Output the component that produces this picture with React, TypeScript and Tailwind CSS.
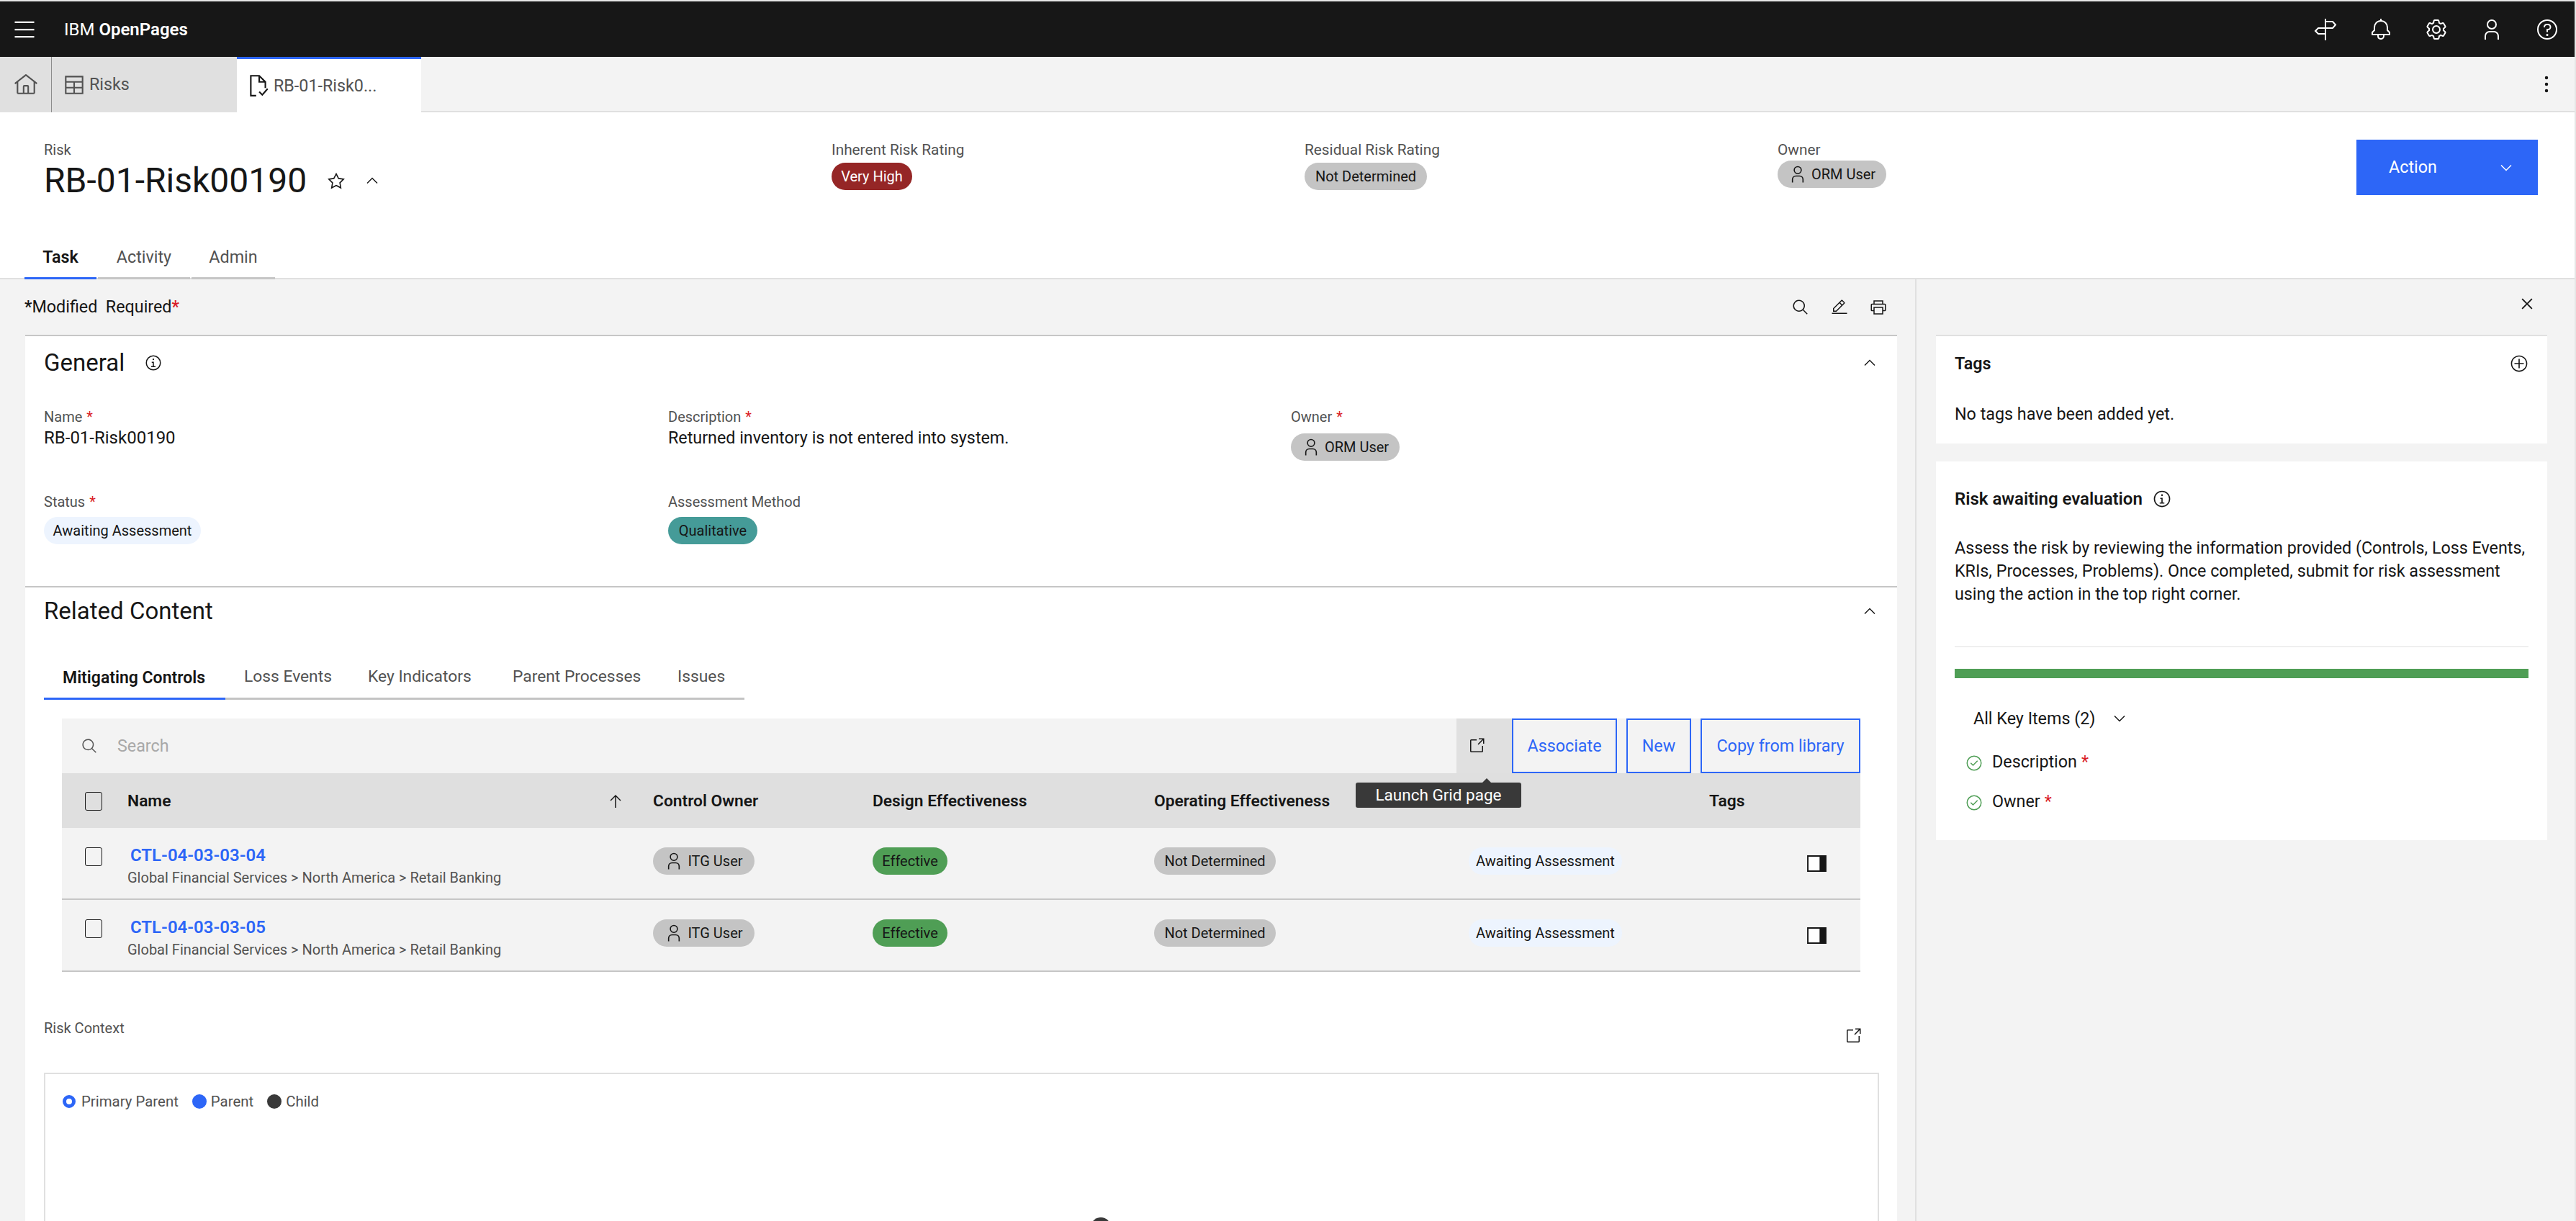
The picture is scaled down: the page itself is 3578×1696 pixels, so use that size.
import type { ReactNode } from "react";

type IconProps = { className?: string };

const Carbon = ({ className, children }: IconProps & { children: ReactNode }) => (
  <svg viewBox="0 0 32 32" fill="currentColor" className={className}>
    {children}
  </svg>
);

const Menu = (p: IconProps) => (
  <Carbon {...p}>
    <path d="M4 6H28V8H4zM4 15H28V17H4zM4 24H28V26H4z" />
  </Carbon>
);
const Signpost = (p: IconProps) => (
  <svg viewBox="0 0 32 32" fill="none" stroke="currentColor" strokeWidth="2" className={p.className}>
    <path d="M16 1V31M16 5H26L30 9.5L26 14H16M16 14H6L2 18L6 22H16" />
  </svg>
);
const Bell = (p: IconProps) => (
  <Carbon {...p}>
    <path d="M28.7071,19.293,26,16.5859V13a10.0136,10.0136,0,0,0-9-9.9492V1H15V3.0508A10.0136,10.0136,0,0,0,6,13v3.5859L3.2929,19.293A1,1,0,0,0,3,20v3a1,1,0,0,0,1,1h7v.7768A5.152,5.152,0,0,0,15.5,29.9746,5.0057,5.0057,0,0,0,21,25V24h7a1,1,0,0,0,1-1V20A1,1,0,0,0,28.7071,19.293ZM19,25a3,3,0,0,1-6,0V24h6Zm8-3H5V20.4141L7.707,17.707A1,1,0,0,0,8,17V13a8,8,0,0,1,16,0v4a1,1,0,0,0,.293.707L27,20.4141Z" />
  </Carbon>
);
const Gear = (p: IconProps) => (
  <Carbon {...p}>
    <path d="M27,16.76c0-.25,0-.5,0-.76s0-.51,0-.77l1.92-1.68A2,2,0,0,0,29.3,11L26.94,7a2,2,0,0,0-1.73-1,2,2,0,0,0-.64.1l-2.43.82a11.35,11.35,0,0,0-1.31-.75l-.51-2.52a2,2,0,0,0-2-1.61H13.64a2,2,0,0,0-2,1.61l-.51,2.52a11.48,11.48,0,0,0-1.32.75L7.43,6.06A2,2,0,0,0,6.79,6,2,2,0,0,0,5.06,7L2.7,11a2,2,0,0,0,.41,2.51L5,15.24c0,.25,0,.5,0,.76s0,.51,0,.77L3.11,18.45A2,2,0,0,0,2.7,21L5.06,25a2,2,0,0,0,1.73,1,2,2,0,0,0,.64-.1l2.43-.82a11.35,11.35,0,0,0,1.31.75l.51,2.52a2,2,0,0,0,2,1.61h4.72a2,2,0,0,0,2-1.61l.51-2.52a11.48,11.48,0,0,0,1.32-.75l2.42.82a2,2,0,0,0,.64.1,2,2,0,0,0,1.73-1L29.3,21a2,2,0,0,0-.41-2.51ZM25.21,24l-3.43-1.16a8.86,8.86,0,0,1-2.71,1.57L18.36,28H13.64l-.71-3.55a9.36,9.36,0,0,1-2.7-1.57L6.79,24,4.43,20l2.72-2.4a8.9,8.9,0,0,1,0-3.13L4.43,12,6.79,8l3.43,1.16a8.86,8.86,0,0,1,2.71-1.57L13.64,4h4.72l.71,3.55a9.36,9.36,0,0,1,2.7,1.57L25.21,8,27.57,12l-2.72,2.4a8.9,8.9,0,0,1,0,3.13L27.57,20Z" />
    <path d="M16,22a6,6,0,1,1,6-6A5.94,5.94,0,0,1,16,22Zm0-10a3.91,3.91,0,0,0-4,4,3.91,3.91,0,0,0,4,4,3.91,3.91,0,0,0,4-4A3.91,3.91,0,0,0,16,12Z" />
  </Carbon>
);
const UserIcon = (p: IconProps) => (
  <Carbon {...p}>
    <path d="M16,4a5,5,0,1,1-5,5,5,5,0,0,1,5-5m0-2a7,7,0,1,0,7,7A7,7,0,0,0,16,2Z" />
    <path d="M26,30H24V25a5,5,0,0,0-5-5H13a5,5,0,0,0-5,5v5H6V25a7,7,0,0,1,7-7h6a7,7,0,0,1,7,7Z" />
  </Carbon>
);
const Help = (p: IconProps) => (
  <Carbon {...p}>
    <path d="M16,2A14,14,0,1,0,30,16,14,14,0,0,0,16,2Zm0,26A12,12,0,1,1,28,16,12,12,0,0,1,16,28Z" />
    <circle cx="16" cy="23.5" r="1.5" />
    <path d="M17,8H15.5A4.49,4.49,0,0,0,11,12.5V13h2v-.5A2.5,2.5,0,0,1,15.5,10H17a2.5,2.5,0,0,1,0,5H15v4.5h2V17a4.5,4.5,0,0,0,0-9Z" />
  </Carbon>
);
const Home = (p: IconProps) => (
  <Carbon {...p}>
    <path d="M16.6123,2.2138a1.01,1.01,0,0,0-1.2427,0L1,13.4194l1.2427,1.5717L4,13.6209V26a2.0041,2.0041,0,0,0,2,2H26a2.0037,2.0037,0,0,0,2-2V13.63L29.7573,15,31,13.4282ZM18,26H14V18h4Zm2,0V18a2.0023,2.0023,0,0,0-2-2H14a2.002,2.002,0,0,0-2,2v8H6V12.0615l10-7.79,10,7.8005V26Z" />
  </Carbon>
);
const TableIcon = (p: IconProps) => (
  <svg viewBox="0 0 32 32" fill="none" stroke="currentColor" strokeWidth="2" className={p.className}>
    <path d="M5 5H27V27H5ZM5 12H27M5 19.5H27M16 12V27" />
  </svg>
);
const DocCheck = (p: IconProps) => (
  <svg viewBox="0 0 32 32" fill="none" stroke="currentColor" strokeWidth="2" className={p.className}>
    <path d="M13 29H6V3H17L25 11V19M17 3V11H25M17 24L21 28L28 20" />
  </svg>
);
const Star = (p: IconProps) => (
  <Carbon {...p}>
    <path d="M16,6.52l2.76,5.58.46,1,1,.15,6.16.89L22,18.44l-.75.73.18,1,1.05,6.13-5.51-2.89L16,23l-.93.49L9.56,26.34l1-6.13.18-1L10,18.44,5.58,14.09l6.16-.89,1-.15.46-1L16,6.52M16,2l-4.55,9.22L1.28,12.69l7.36,7.18L6.9,30,16,25.22,25.1,30,23.36,19.87l7.36-7.17L20.55,11.22Z" />
  </Carbon>
);
const ChevronUp = (p: IconProps) => (
  <Carbon {...p}>
    <path d="M16 10 26 20 24.6 21.4 16 12.8 7.4 21.4 6 20z" />
  </Carbon>
);
const ChevronDown = (p: IconProps) => (
  <Carbon {...p}>
    <path d="M16 22 6 12 7.4 10.6 16 19.2 24.6 10.6 26 12z" />
  </Carbon>
);
const Close = (p: IconProps) => (
  <Carbon {...p}>
    <path d="M24 9.4 22.6 8 16 14.6 9.4 8 8 9.4 14.6 16 8 22.6 9.4 24 16 17.4 22.6 24 24 22.6 17.4 16z" />
  </Carbon>
);
const Search = (p: IconProps) => (
  <Carbon {...p}>
    <path d="M29,27.5859l-7.5521-7.5521a11.0177,11.0177,0,1,0-1.4141,1.4141L27.5859,29ZM4,13a9,9,0,1,1,9,9A9.01,9.01,0,0,1,4,13Z" />
  </Carbon>
);
const Edit = (p: IconProps) => (
  <Carbon {...p}>
    <path d="M2 26H30V28H2zM25.4 9c.8-.8.8-2 0-2.8l-3.6-3.6c-.8-.8-2-.8-2.8 0l-15 15V24h6.4L25.4 9zM20.4 4L24 7.6l-3 3L17.4 7 20.4 4zM6 22v-3.6l10-10 3.6 3.6-10 10H6z" />
  </Carbon>
);
const Printer = (p: IconProps) => (
  <Carbon {...p}>
    <path d="M28,9H25V3H7V9H4a2,2,0,0,0-2,2V21a2,2,0,0,0,2,2H7v6H25V23h3a2,2,0,0,0,2-2V11A2,2,0,0,0,28,9ZM9,5H23V9H9ZM23,27H9V17H23Zm5-6H25V15H7v6H4V11H28Z" />
  </Carbon>
);
const Info = (p: IconProps) => (
  <Carbon {...p}>
    <polygon points="17 22 17 14 13 14 13 16 15 16 15 22 12 22 12 24 20 24 20 22 17 22" />
    <path d="M16,8a1.5,1.5,0,1,0,1.5,1.5A1.5,1.5,0,0,0,16,8Z" />
    <path d="M16,30A14,14,0,1,1,30,16,14,14,0,0,1,16,30ZM16,4A12,12,0,1,0,28,16,12,12,0,0,0,16,4Z" />
  </Carbon>
);
const CheckCircle = (p: IconProps) => (
  <Carbon {...p}>
    <path d="M14 21.414 9 16.413 10.413 15 14 18.586 21.585 11 23 12.415 14 21.414z" />
    <path d="M16,2A14,14,0,1,0,30,16,14,14,0,0,0,16,2Zm0,26A12,12,0,1,1,28,16,12,12,0,0,1,16,28Z" />
  </Carbon>
);
const AddCircle = (p: IconProps) => (
  <Carbon {...p}>
    <path d="M16,4c6.6,0,12,5.4,12,12s-5.4,12-12,12S4,22.6,4,16S9.4,4,16,4 M16,2C8.3,2,2,8.3,2,16s6.3,14,14,14s14-6.3,14-14S23.7,2,16,2z" />
    <polygon points="24 15 17 15 17 8 15 8 15 15 8 15 8 17 15 17 15 24 17 24 17 17 24 17" />
  </Carbon>
);
const ArrowUp = (p: IconProps) => (
  <Carbon {...p}>
    <path d="M16 4 6 14 7.41 15.41 15 7.83 15 28 17 28 17 7.83 24.59 15.41 26 14 16 4z" />
  </Carbon>
);
const Launch = (p: IconProps) => (
  <Carbon {...p}>
    <path d="M26,28H6a2.0027,2.0027,0,0,1-2-2V6A2.0027,2.0027,0,0,1,6,4H16V6H6V26H26V16h2V26A2.0027,2.0027,0,0,1,26,28Z" />
    <polygon points="20 2 20 4 26.586 4 18 12.586 19.414 14 28 5.414 28 12 30 12 30 2 20 2" />
  </Carbon>
);
const SidePanel = (p: IconProps) => (
  <svg viewBox="0 0 28 24" className={p.className}>
    <path d="M1 1H27V23H1Z" fill="#ffffff" stroke="currentColor" strokeWidth="2" />
    <path d="M18 1H27V23H18Z" fill="currentColor" />
  </svg>
);
const Dots = (p: IconProps) => (
  <Carbon {...p}>
    <circle cx="16" cy="8" r="2" />
    <circle cx="16" cy="16" r="2" />
    <circle cx="16" cy="24" r="2" />
  </Carbon>
);

const Req = () => <span className="text-[#da1e28] ml-[6px]">*</span>;

const Pill = ({ className, children }: { className: string; children: ReactNode }) => (
  <span className={`inline-flex items-center justify-center h-[38px] rounded-[19px] text-[20px] whitespace-nowrap ${className}`}>
    {children}
  </span>
);

const UserPill = ({ name, className }: { name: string; className: string }) => (
  <Pill className={`bg-[#c4c4c4] text-[#161616] ${className}`}>
    <UserIcon className="w-[26px] h-[26px] mr-[6px]" />
    {name}
  </Pill>
);

const controls = [
  { id: "CTL-04-03-03-04", path: "Global Financial Services > North America > Retail Banking" },
  { id: "CTL-04-03-03-05", path: "Global Financial Services > North America > Retail Banking" },
];

const relatedTabs = [
  { label: "Loss Events", width: "w-[172px]" },
  { label: "Key Indicators", width: "w-[201px]" },
  { label: "Parent Processes", width: "w-[229px]" },
  { label: "Issues", width: "w-[119px]" },
];

const tableCols = "grid grid-cols-[91px_730px_305px_391px_437px_334px_136px_1fr]";

export default function App() {
  return (
    <div className="w-[3578px] h-[1696px] overflow-hidden bg-[#e6e6e6] pt-[2px] pr-[2px] font-['Roboto',sans-serif] text-[23.3px] text-[#161616]">
      <header className="h-[77px] bg-[#171717] text-white flex items-center">
        <Menu className="w-[36px] h-[36px] ml-[16px]" />
        <div className="ml-[37px] text-[24px]">
          IBM <span className="font-semibold">OpenPages</span>
        </div>
        <div className="ml-auto flex items-center gap-[45px] mr-[22px]">
          <Signpost className="w-[32px] h-[32px]" />
          <Bell className="w-[32px] h-[32px]" />
          <Gear className="w-[32px] h-[32px]" />
          <UserIcon className="w-[32px] h-[32px]" />
          <Help className="w-[32px] h-[32px]" />
        </div>
      </header>

      <nav className="h-[77px] bg-[#f3f3f3] border-b-2 border-[#e0e0e0] flex text-[#525252]">
        <div className="w-[72px] h-[77px] bg-[#e0e0e0] border-r border-[#8d8d8d] flex items-center justify-center">
          <Home className="w-[34px] h-[34px]" />
        </div>
        <div className="w-[257px] h-[77px] bg-[#e0e0e0] flex items-center pl-[14px] gap-[4px]">
          <TableIcon className="w-[34px] h-[34px]" />
          Risks
        </div>
        <div className="w-[256px] h-[77px] bg-white border-t-[3px] border-[#2d66f7] flex items-center pl-[13px] gap-[4px]">
          <DocCheck className="w-[34px] h-[34px] text-[#161616]" />
          RB-01-Risk0...
        </div>
        <div className="ml-auto mr-[21px] flex items-center">
          <Dots className="w-[36px] h-[36px] text-[#161616]" />
        </div>
      </nav>

      <section className="h-[232px] bg-white flex flex-col justify-between">
        <div className="flex pt-[38px] pl-[61px] pr-[51px]">
          <div className="w-[1094px]">
            <div className="text-[20px] leading-[28px] text-[#525252]">Risk</div>
            <div className="flex items-center h-[56px] mt-[1px]">
              <span className="text-[48px]">RB-01-Risk00190</span>
              <Star className="w-[26px] h-[26px] ml-[28px]" />
              <ChevronUp className="w-[24px] h-[24px] ml-[25px]" />
            </div>
          </div>
          <div className="w-[657px]">
            <div className="text-[20.8px] leading-[28px] text-[#525252]">Inherent Risk Rating</div>
            <Pill className="mt-[4px] w-[112px] bg-[#952626] text-white">Very High</Pill>
          </div>
          <div className="w-[657px]">
            <div className="text-[20.8px] leading-[28px] text-[#525252]">Residual Risk Rating</div>
            <Pill className="mt-[4px] w-[170px] bg-[#c4c4c4]">Not Determined</Pill>
          </div>
          <div className="w-[804px]">
            <div className="text-[20.8px] leading-[28px] text-[#525252]">Owner</div>
            <UserPill name="ORM User" className="mt-[1px] w-[151px]" />
          </div>
          <button className="w-[252px] h-[77px] bg-[#2d66f7] text-white text-left pl-[45px] flex items-center">
            Action
            <ChevronDown className="w-[24px] h-[24px] ml-[84px]" />
          </button>
        </div>
        <div className="border-b-2 border-[#e0e0e0] pl-[34px] flex gap-[2px] h-[58px]">
          <div className="w-[100px] h-[58px] border-b-[3px] border-[#2d66f7] flex items-center justify-center font-semibold">Task</div>
          <div className="w-[128px] h-[58px] border-b-[3px] border-[#c6c6c6] flex items-center justify-center text-[#525252]">Activity</div>
          <div className="w-[116px] h-[58px] border-b-[3px] border-[#c6c6c6] flex items-center justify-center text-[#525252]">Admin</div>
        </div>
      </section>

      <div className="flex h-[1308px] bg-[#f3f3f3]">
        <main className="w-[2662px] border-r-2 border-[#e0e0e0] pl-[35px] pr-[25px] shrink-0">
          <div className="h-[77px] flex items-center">
            <div className="-ml-[1px] text-[#161616]">
              <span className="font-semibold">*</span>Modified&nbsp; Required<span className="text-[#da1e28] font-semibold">*</span>
            </div>
            <div className="ml-auto flex items-center gap-[30px] mr-[14px]">
              <Search className="w-[24px] h-[24px]" />
              <Edit className="w-[24px] h-[24px]" />
              <Printer className="w-[24px] h-[24px]" />
            </div>
          </div>

          <section className="h-[351px] bg-white border-t-2 border-b-2 border-[#c6c6c6] pl-[26px] pr-[26px]">
            <div className="h-[73px] flex items-center">
              <span className="text-[33px]">General</span>
              <Info className="w-[24px] h-[24px] ml-[28px]" />
              <ChevronUp className="w-[24px] h-[24px] ml-auto" />
            </div>
            <div className="grid grid-cols-[867px_865px_1fr] grid-rows-[118px_auto] mt-[25px]">
              <div>
                <div className="text-[20px] leading-[28px] text-[#525252]">Name<Req /></div>
                <div className="text-[24px] leading-[28px] mt-[1px]">RB-01-Risk00190</div>
              </div>
              <div>
                <div className="text-[20px] leading-[28px] text-[#525252]">Description<Req /></div>
                <div className="leading-[28px] mt-[1px]">Returned inventory is not entered into system.</div>
              </div>
              <div>
                <div className="text-[20px] leading-[28px] text-[#525252]">Owner<Req /></div>
                <UserPill name="ORM User" className="mt-[9px] w-[151px]" />
              </div>
              <div>
                <div className="text-[20px] leading-[28px] text-[#525252]">Status<Req /></div>
                <Pill className="mt-[7px] w-[218px] bg-[#edf4fe]">Awaiting Assessment</Pill>
              </div>
              <div>
                <div className="text-[20px] leading-[28px] text-[#525252]">Assessment Method</div>
                <Pill className="mt-[7px] w-[124px] bg-[#459b98]">Qualitative</Pill>
              </div>
            </div>
          </section>

          <section className="h-[900px] bg-white pt-0 pl-[26px] pr-[25px]">
            <div className="h-[66px] flex items-center">
              <span className="text-[33px]">Related Content</span>
              <ChevronUp className="w-[24px] h-[24px] ml-auto mr-[1px]" />
            </div>

            <div className="mt-[33px] w-[973px] h-[57px] flex border-b-[3px] border-[#c4c4c4] text-[#525252] text-[22.8px]">
              <div className="w-[252px] h-[57px] border-b-[3px] border-[#2d66f7] pl-[26px] pt-[1px] flex items-center font-semibold text-[23px] text-[#161616]">
                Mitigating Controls
              </div>
              {relatedTabs.map((t) => (
                <div key={t.label} className={`${t.width} pl-[26px] pb-[4px] flex items-center whitespace-nowrap`}>
                  {t.label}
                </div>
              ))}
            </div>

            <div className="mt-[26px] ml-[25px] w-[2498px] relative">
              <div className="h-[76px] flex bg-[#f3f3f3]">
                <div className="flex-1 flex items-center pl-[27px] gap-[27px] text-[#a8a8a8]">
                  <Search className="w-[23px] h-[23px] text-[#525252]" />
                  Search
                </div>
                <div className="w-[77px] bg-[#e0e0e0] flex items-center pl-[16px]">
                  <Launch className="w-[24px] h-[24px]" />
                </div>
                <button className="w-[146px] border-2 border-[#2d66f7] text-[#2d66f7]">Associate</button>
                <button className="w-[90px] ml-[13px] border-2 border-[#2d66f7] text-[#2d66f7]">New</button>
                <button className="w-[222px] ml-[13px] border-2 border-[#2d66f7] text-[#2d66f7]">Copy from library</button>
              </div>

              <div className={`${tableCols} h-[76px] pt-[2px] bg-[#dfdfdf] items-center font-semibold text-[22.8px]`}>
                <div className="pl-[32px]">
                  <div className="w-[24px] h-[26px] border-[1.5px] border-[#161616] rounded-[3px]" />
                </div>
                <div className="flex items-center justify-between pr-[40px]">
                  Name
                  <ArrowUp className="w-[24px] h-[24px]" />
                </div>
                <div>Control Owner</div>
                <div>Design Effectiveness</div>
                <div>Operating Effectiveness</div>
                <div />
                <div>Tags</div>
                <div />
              </div>

              {controls.map((c) => (
                <div key={c.id} className={`${tableCols} h-[100px] bg-[#f3f3f3] border-b-2 border-[#c6c6c6] pt-[27px]`}>
                  <div className="pl-[32px]">
                    <div className="w-[24px] h-[26px] border-[1.5px] border-[#161616] rounded-[3px]" />
                  </div>
                  <div className="-mt-[1px]">
                    <div className="pl-[4px] leading-[24px] text-[24px] font-semibold text-[#2d66f7]">{c.id}</div>
                    <div className="mt-[5px] text-[20px] leading-[28px] text-[#525252] whitespace-nowrap">{c.path}</div>
                  </div>
                  <div>
                    <UserPill name="ITG User" className="w-[141px]" />
                  </div>
                  <div>
                    <Pill className="w-[104px] bg-[#4f9e55]">Effective</Pill>
                  </div>
                  <div>
                    <Pill className="w-[169px] bg-[#c4c4c4]">Not Determined</Pill>
                  </div>
                  <div>
                    <Pill className="w-[213px] bg-[#edf4fe]">Awaiting Assessment</Pill>
                  </div>
                  <div />
                  <div className="mt-[11px]">
                    <SidePanel className="w-[27px] h-[23px]" />
                  </div>
                </div>
              ))}

              <div className="absolute left-[1797px] top-[89px] w-[230px] h-[35px] bg-[#393939] text-white rounded-[3px] flex items-center justify-center text-[22.5px]">
                Launch Grid page
                <div className="absolute -top-[6px] left-[176px] w-0 h-0 border-l-[6px] border-r-[6px] border-b-[6px] border-l-transparent border-r-transparent border-b-[#393939]" />
              </div>
            </div>

            <div className="mt-[64px] h-[76px] flex justify-between pr-[24px]">
              <div className="text-[20px] leading-[28px] text-[#525252]">Risk Context</div>
              <Launch className="w-[24px] h-[24px] mt-[13px]" />
            </div>
            <div className="h-[400px] border-2 border-[#e0e0e0] pl-[24px] pt-[24px]">
              <div className="flex items-center text-[20.4px] leading-[28px] text-[#525252]">
                <span className="w-[18px] h-[18px] rounded-full border-[5px] border-[#2d66f7] mr-[8px]" />
                Primary Parent
                <span className="w-[20px] h-[20px] rounded-full bg-[#2d66f7] ml-[19px] mr-[6px]" />
                Parent
                <span className="w-[20px] h-[20px] rounded-full bg-[#393939] ml-[19px] mr-[6px]" />
                Child
              </div>
              <div className="mt-[147px] ml-[1428px] w-[28px] h-[28px] rounded-full bg-[#393939]" />
            </div>
          </section>
        </main>

        <aside className="flex-1 pl-[27px] pr-[38px]">
          <div className="h-[77px] flex items-center justify-end">
            <Close className="w-[30px] h-[30px] mr-[13px] -mt-[10px]" />
          </div>
          <section className="h-[151px] bg-white border-t-2 border-[#e0e0e0] px-[26px] pt-[22px]">
            <div className="flex items-center justify-between leading-[32px]">
              <span className="font-semibold">Tags</span>
              <AddCircle className="w-[26px] h-[26px]" />
            </div>
            <div className="mt-[38px] leading-[32px]">No tags have been added yet.</div>
          </section>
          <section className="h-[526px] mt-[25px] bg-white px-[26px] pt-[36px]">
            <div className="flex items-center gap-[14px] leading-[32px] text-[24px] font-semibold">
              Risk awaiting evaluation
              <Info className="w-[26px] h-[26px]" />
            </div>
            <p className="mt-[36px] leading-[32px] whitespace-nowrap">
              Assess the risk by reviewing the information provided (Controls, Loss Events,
              <br />
              KRIs, Processes, Problems). Once completed, submit for risk assessment
              <br />
              using the action in the top right corner.
            </p>
            <div className="mt-[57px] h-[1px] bg-[#e0e0e0]" />
            <div className="mt-[30px] h-[13px] bg-[#4f9e55]" />
            <div className="mt-[40px] pl-[26px] flex items-center leading-[32px]">
              All Key Items (2)
              <ChevronDown className="w-[24px] h-[24px] ml-[22px]" />
            </div>
            <div className="mt-[28px] pl-[15px] flex items-center gap-[13px] leading-[32px]">
              <CheckCircle className="w-[24px] h-[24px] text-[#4f9e55] mt-[4px]" />
              <span>Description<Req /></span>
            </div>
            <div className="mt-[23px] pl-[15px] flex items-center gap-[13px] leading-[32px]">
              <CheckCircle className="w-[24px] h-[24px] text-[#4f9e55] mt-[4px]" />
              <span>Owner<Req /></span>
            </div>
          </section>
        </aside>
      </div>
    </div>
  );
}
